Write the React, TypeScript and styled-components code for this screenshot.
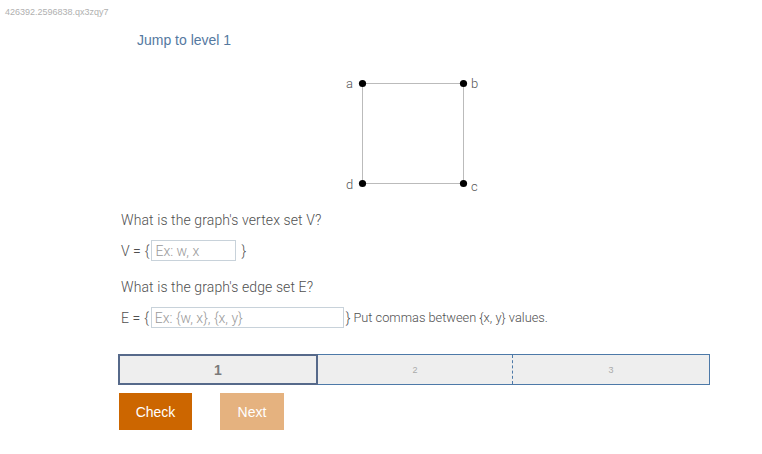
import React from "react";
import styled, { createGlobalStyle } from "styled-components";

const Global = createGlobalStyle`
  html, body { margin: 0; padding: 0; background: #fff; }
  body { font-family: Roboto, "Liberation Sans", sans-serif; }
`;

const Page = styled.div`
  display: flex;
  flex-direction: column;
`;

const SessionId = styled.div`
  margin: 7px 0 0 5px;
  font-family: "Liberation Sans", Arial, sans-serif;
  font-size: 9px;
  line-height: 11px;
  color: #b0b0b0;
`;

const Content = styled.div`
  margin-left: 118px;
  width: 592px;
  display: flex;
  flex-direction: column;
`;

const JumpLink = styled.a`
  margin: 14px 0 0 19px;
  font-family: "Liberation Sans", Arial, sans-serif;
  font-size: 14px;
  line-height: 16px;
  color: #55799f;
  cursor: pointer;
  align-self: flex-start;
`;

const GraphBox = styled.svg`
  display: block;
  margin: 22px 0 0 214px;
`;

const Question = styled.div<{ $top: number }>`
  margin: ${(p) => p.$top}px 0 0 3px;
  font-size: 14px;
  font-weight: 300;
  line-height: 20px;
  letter-spacing: 0.1px;
  color: #4f4f4f;
`;

const AnswerRow = styled.div`
  margin: 10px 0 0 3px;
  display: flex;
  align-items: center;
  height: 21px;
  font-size: 14px;
  font-weight: 300;
  color: #4f4f4f;
`;

const Brace = styled.span<{ $m: string }>`
  margin: ${(p) => p.$m};
`;

const Field = styled.input<{ $w: number }>`
  box-sizing: border-box;
  width: ${(p) => p.$w}px;
  height: 21px;
  border: 1px solid #c8d2da;
  padding: 0 3px;
  font-family: Roboto, sans-serif;
  font-weight: 300;
  font-size: 14px;
  color: #333;
  outline: none;
  &::placeholder { color: #9a9a9a; }
`;

const Hint = styled.span`
  margin-left: 3px;
  font-size: 12.8px;
`;

const Progress = styled.div`
  margin-top: 26px;
  display: flex;
  box-sizing: border-box;
  height: 31px;
  border: 1px solid #4d79a8;
  background: #eeeeee;
`;

const Segment = styled.div<{ $active?: boolean; $dashed?: boolean; $basis?: number }>`
  flex: ${(p) => (p.$basis ? `0 0 ${p.$basis}px` : "1")};
  box-sizing: border-box;
  display: flex;
  align-items: center;
  justify-content: center;
  font-family: "Liberation Sans", Arial, sans-serif;
  color: ${(p) => (p.$active ? "#7a7a7a" : "#aaaaaa")};
  font-size: ${(p) => (p.$active ? "14px" : "9px")};
  font-weight: ${(p) => (p.$active ? "bold" : "normal")};
  border-left: ${(p) => (p.$dashed ? "1px dashed #4d79a8" : "none")};
  ${(p) =>
    p.$active
      ? `margin: -1px 0 -1px -1px; border: 2px solid #56698a;`
      : ""}
`;

const Buttons = styled.div`
  margin: 8px 0 0 1px;
  display: flex;
  gap: 28px;
`;

const Button = styled.button<{ $w: number; $disabled?: boolean }>`
  width: ${(p) => p.$w}px;
  height: 37px;
  border: none;
  padding: 0;
  background: ${(p) => (p.$disabled ? "#e5b27f" : "#cc6600")};
  color: #fff;
  font-family: "Liberation Sans", Arial, sans-serif;
  font-size: 14px;
  cursor: pointer;
`;

const NodeLabel = styled.text`
  font-family: Roboto, sans-serif;
  font-weight: 300;
  font-size: 13px;
  fill: #555;
`;

function Graph() {
  const nodes = [
    { x: 30, y: 13, label: "a", lx: 14, ly: 18 },
    { x: 131, y: 13, label: "b", lx: 139, ly: 18 },
    { x: 131, y: 113, label: "c", lx: 139, ly: 121 },
    { x: 30, y: 113, label: "d", lx: 14, ly: 119 },
  ];
  return (
    <GraphBox width={160} height={125} viewBox="0 0 160 125">
      <g stroke="#bbbbbb" strokeWidth={1}>
        <line x1={30.5} y1={13.5} x2={131.5} y2={13.5} />
        <line x1={131.5} y1={13.5} x2={131.5} y2={113.5} />
        <line x1={131.5} y1={113.5} x2={30.5} y2={113.5} />
        <line x1={30.5} y1={113.5} x2={30.5} y2={13.5} />
      </g>
      {nodes.map((n) => (
        <g key={n.label}>
          <circle cx={n.x + 0.5} cy={n.y + 0.5} r={3.6} fill="#000" />
          <NodeLabel x={n.lx} y={n.ly}>
            {n.label}
          </NodeLabel>
        </g>
      ))}
    </GraphBox>
  );
}

export default function App() {
  return (
    <Page>
      <Global />
      <SessionId>426392.2596838.qx3zqy7</SessionId>
      <Content>
        <JumpLink>Jump to level 1</JumpLink>
        <Graph />
        <Question $top={15}>What is the graph's vertex set V?</Question>
        <AnswerRow>
          V = <Brace $m="0 2px 0 4px">{"{"}</Brace>
          <Field $w={85} placeholder="Ex: w, x" />
          <Brace $m="0 0 0 5px">{"}"}</Brace>
        </AnswerRow>
        <Question $top={16}>What is the graph's edge set E?</Question>
        <AnswerRow>
          E = <Brace $m="0 2px 0 4px">{"{"}</Brace>
          <Field $w={193} placeholder="Ex: {w, x}, {x, y}" />
          <Brace $m="0 0 0 2px">{"}"}</Brace>
          <Hint>Put commas between {"{x, y}"} values.</Hint>
        </AnswerRow>
        <Progress>
          <Segment $active $basis={200}>
            1
          </Segment>
          <Segment $basis={194}>2</Segment>
          <Segment $dashed>3</Segment>
        </Progress>
        <Buttons>
          <Button $w={73}>Check</Button>
          <Button $w={64} $disabled>
            Next
          </Button>
        </Buttons>
      </Content>
    </Page>
  );
}
